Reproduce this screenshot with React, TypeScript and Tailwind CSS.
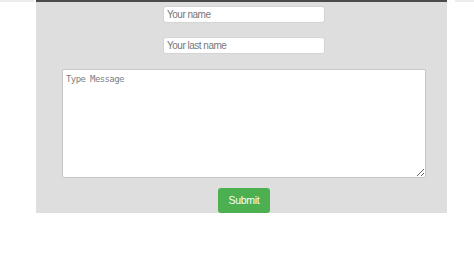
export default function App() {
    return (
        <div className="relative h-[261px] w-[474px] bg-white">
            {/* faint strips at the top edge */}
            <div className="absolute left-0 top-0 h-[2px] w-[34px] bg-[#ececec]" />
            <div className="absolute right-0 top-0 h-[2px] w-[19px] bg-[#ececec]" />

            <div className="ml-[36px] w-[411px] bg-[#dedede]">
                <div className="h-[2px] bg-[#4a4a4a]" />
                <form
                    className="flex flex-col items-center pl-[5px] pt-[4px]"
                    onSubmit={(e) => e.preventDefault()}
                >
                    <input
                        type="text"
                        placeholder="Your name"
                        className="h-[17px] w-[162px] rounded-[3px] border border-[#d4d4d4] bg-white px-[3px] text-[10px] leading-none tracking-[-0.5px] text-black outline-none placeholder:text-[#777]"
                        style={{ fontFamily: '"Liberation Sans", Arial, sans-serif' }}
                    />
                    <input
                        type="text"
                        placeholder="Your last name"
                        className="mt-[14px] h-[17px] w-[162px] rounded-[3px] border border-[#d4d4d4] bg-white px-[3px] text-[10px] leading-none tracking-[-0.5px] text-black outline-none placeholder:text-[#777]"
                        style={{ fontFamily: '"Liberation Sans", Arial, sans-serif' }}
                    />
                    <textarea
                        placeholder="Type Message"
                        className="mt-[15px] h-[109px] w-[364px] rounded-[2px] border border-[#c8c8c8] bg-white px-[3px] py-[3px] text-[9px] leading-[12px] tracking-[-0.6px] text-black outline-none placeholder:text-[#808080]"
                        style={{ fontFamily: '"DejaVu Sans Mono", monospace' }}
                    />
                    <button
                        type="submit"
                        className="mt-[10px] h-[25px] w-[52px] rounded-[3px] bg-[#4caf50] text-[10.5px] tracking-[-0.3px] text-white"
                        style={{ fontFamily: '"Liberation Sans", Arial, sans-serif' }}
                    >
                        Submit
                    </button>
                </form>
            </div>
        </div>
    );
}
